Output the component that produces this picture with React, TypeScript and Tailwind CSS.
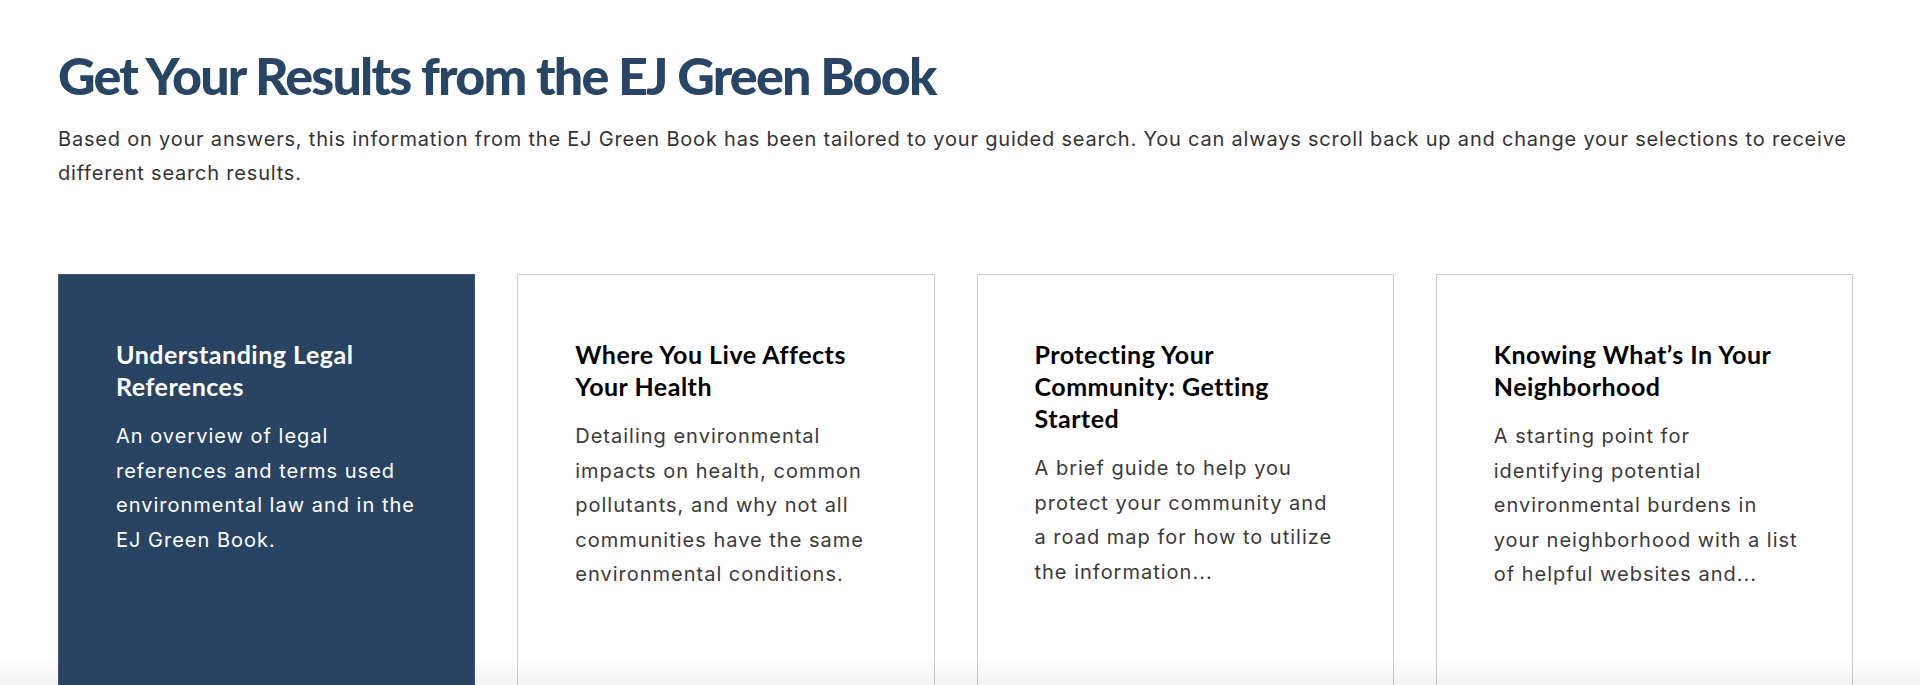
const cards = [
  {
    title: 'Understanding Legal References',
    body: 'An overview of legal references and terms used environmental law and in the EJ Green Book.',
    active: true,
  },
  {
    title: 'Where You Live Affects Your Health',
    body: 'Detailing environmental impacts on health, common pollutants, and why not all communities have the same environmental conditions.',
    active: false,
  },
  {
    title: 'Protecting Your Community: Getting Started',
    body: 'A brief guide to help you protect your community and a road map for how to utilize the information...',
    active: false,
  },
  {
    title: 'Knowing What\u2019s In Your Neighborhood',
    body: 'A starting point for identifying potential environmental burdens in your neighborhood with a list of helpful websites and...',
    active: false,
  },
];

const heading = { fontFamily: 'Lato, "Noto Sans", sans-serif' };
const text = { fontFamily: 'Inter, "Noto Sans", sans-serif' };

export default function App() {
  return (
    <div className="relative h-[685px] w-full overflow-hidden bg-white">
      <div className="pl-[58px] pr-[67px] pt-[44px]">
        <h1 style={heading} className="text-[52px] font-black leading-[1.2] tracking-[-0.035em] text-[#284565]">
          Get Your Results from the EJ Green Book
        </h1>
        <p style={text} className="mt-[16px] text-[20px] leading-[34px] tracking-[0.04em] text-[#333333]">
          Based on your answers, this information from the EJ Green Book has been tailored to your guided search. You can always scroll back up and change your selections to receive different search results.
        </p>

        <div className="mt-[84px] grid grid-cols-4 gap-[42px]">
          {cards.map((card) => (
            <div
              key={card.title}
              className={`h-[440px] border pl-[57px] pr-[53px] pt-[63px] ${card.active ? 'border-[#3d5676] bg-[#294463]' : 'border-[#c6ccd4] bg-white'}`}
            >
              <h3
                style={heading}
                className={`text-[25px] font-bold leading-[32px] tracking-[0.02em] ${card.active ? 'text-white' : 'text-black'}`}
              >
                {card.title}
              </h3>
              <p
                style={text}
                className={`mt-[17px] text-[20px] leading-[34.5px] tracking-[0.05em] ${card.active ? 'text-white' : 'text-[#3a3a3a]'}`}
              >
                {card.body}
              </p>
            </div>
          ))}
        </div>
      </div>
      <div className="pointer-events-none absolute inset-x-0 bottom-0 h-[26px] bg-gradient-to-b from-transparent to-black/[0.05]" />
    </div>
  );
}
